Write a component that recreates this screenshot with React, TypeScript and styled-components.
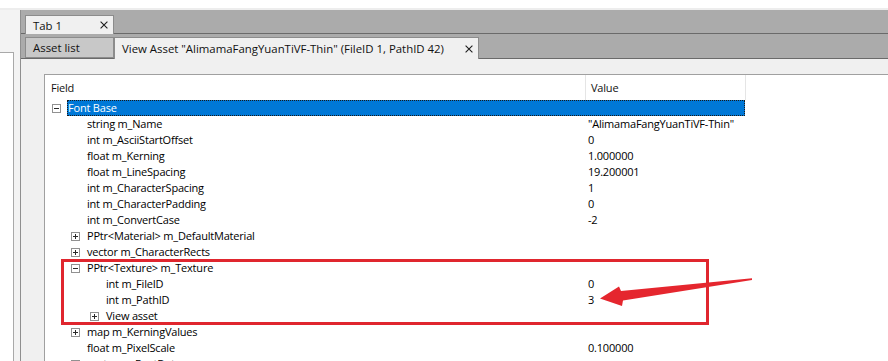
import styled, { createGlobalStyle } from "styled-components";

const GlobalStyle = createGlobalStyle`
  html, body { margin: 0; padding: 0; background: #fff; }
  body { font-family: "Open Sans", "Noto Sans", "Noto Sans CJK SC", sans-serif; }
`;

const Page = styled.div`
  position: relative;
  width: 888px;
  height: 361px;
  overflow: hidden;
  display: flex;
  flex-direction: column;
  background: #fff;
  font-family: "Open Sans", "Noto Sans", "Noto Sans CJK SC", sans-serif;
  font-size: 11px;
  letter-spacing: -0.2px;
  color: #000;
`;

const TopGap = styled.div`
  flex: none;
  height: 8px;
  border-bottom: 2px solid #ededed;
`;

const Workspace = styled.div`
  flex: 1;
  min-height: 0;
  display: flex;
`;

const SidePane = styled.div`
  flex: none;
  width: 20px;
  background: #f3f3f3;
  display: flex;
  flex-direction: column;
  padding-top: 42px;
  box-sizing: border-box;
`;

const SideBox = styled.div`
  flex: 1;
  width: 13px;
  background: #fff;
  border-top: 1px solid #a9a9a9;
  border-right: 1px solid #a9a9a9;
`;

const TabHost = styled.div`
  flex: 1;
  min-width: 0;
  display: flex;
  flex-direction: column;
  border-left: 1px solid #8f8f8f;
`;

const TabStrip = styled.div<{ $h: number }>`
  flex: none;
  height: ${({ $h }) => $h}px;
  display: flex;
  align-items: flex-end;
  padding-left: 4px;
  background: #ababab;
  border-bottom: 1px solid #6a6a6a;
`;

const Tab = styled.div<{ $w: number; $h: number; $active?: boolean }>`
  box-sizing: border-box;
  width: ${({ $w }) => $w}px;
  height: ${({ $h }) => $h}px;
  margin-bottom: ${({ $active }) => ($active ? "-1px" : "0")};
  display: flex;
  align-items: center;
  padding: 0 5px 0 7px;
  background: ${({ $active }) => ($active ? "#f0f0f0" : "#c8c8c8")};
  border: 1px solid #8c8c8c;
  border-bottom: ${({ $active }) => ($active ? "none" : "1px solid #8c8c8c")};
  font-size: 11.4px;
  letter-spacing: 0;
  white-space: nowrap;
  color: #111;
`;

const TabLabel = styled.span`
  flex: 1;
`;

const CloseIcon = styled.svg`
  flex: none;
  width: 8px;
  height: 8px;
`;

const TabPage = styled.div`
  flex: 1;
  min-height: 0;
  display: flex;
  background: #f0f0f0;
  padding: 15px 0 0 23px;
`;

const ListView = styled.div`
  flex: 1;
  background: #fff;
  border-top: 1px solid #a0a0a0;
  border-left: 1px solid #a0a0a0;
  display: flex;
  flex-direction: column;
`;

const Header = styled.div`
  flex: none;
  height: 25px;
  display: flex;
`;

const HeaderCell = styled.div<{ $w: number; $pad: number }>`
  box-sizing: border-box;
  width: ${({ $w }) => $w}px;
  padding-left: ${({ $pad }) => $pad}px;
  line-height: 25px;
  border-right: 1px solid #e5e5e5;
  color: #111;
`;

const Row = styled.div`
  width: 700px;
  height: 16px;
  flex: none;
  display: flex;
  line-height: 16px;
  white-space: nowrap;
`;

const Gutter = styled.div<{ $level: number }>`
  flex: none;
  box-sizing: border-box;
  width: ${({ $level }) => 22 + 19 * $level}px;
  padding-left: ${({ $level }) => 7 + 19 * $level}px;
  display: flex;
  align-items: center;
`;

const Expander = styled.span<{ $open: boolean }>`
  position: relative;
  box-sizing: border-box;
  width: 9px;
  height: 9px;
  border: 1px solid #919191;
  background: #fff;

  &::before {
    content: "";
    position: absolute;
    left: 1px;
    top: 3px;
    width: 5px;
    height: 1px;
    background: #2a2a2a;
  }

  &::after {
    content: "";
    display: ${({ $open }) => ($open ? "none" : "block")};
    position: absolute;
    left: 3px;
    top: 1px;
    width: 1px;
    height: 5px;
    background: #2a2a2a;
  }
`;

const Body = styled.div<{ $selected?: boolean }>`
  flex: 1;
  display: grid;
  grid-template-columns: 1fr 159px;
  background: ${({ $selected }) => ($selected ? "#0078d7" : "transparent")};
  color: ${({ $selected }) => ($selected ? "#fff" : "#000")};
  outline: ${({ $selected }) => ($selected ? "1px dotted #1a1a1a" : "none")};
  outline-offset: -1px;
`;

const Label = styled.span`
  padding-left: 1px;
`;

const Value = styled.span`
  padding-left: 2px;
`;

const Annotation = styled.svg`
  position: absolute;
  left: 0;
  top: 0;
  width: 888px;
  height: 361px;
  pointer-events: none;
`;

type Node = {
  label: string;
  value?: string;
  level: number;
  toggle?: "open" | "closed";
  selected?: boolean;
};

const rows: Node[] = [
  { label: "Font Base", level: 0, toggle: "open", selected: true },
  { label: "string m_Name", value: "\"AlimamaFangYuanTiVF-Thin\"", level: 1 },
  { label: "int m_AsciiStartOffset", value: "0", level: 1 },
  { label: "float m_Kerning", value: "1.000000", level: 1 },
  { label: "float m_LineSpacing", value: "19.200001", level: 1 },
  { label: "int m_CharacterSpacing", value: "1", level: 1 },
  { label: "int m_CharacterPadding", value: "0", level: 1 },
  { label: "int m_ConvertCase", value: "-2", level: 1 },
  { label: "PPtr<Material> m_DefaultMaterial", level: 1, toggle: "closed" },
  { label: "vector m_CharacterRects", level: 1, toggle: "closed" },
  { label: "PPtr<Texture> m_Texture", level: 1, toggle: "open" },
  { label: "int m_FileID", value: "0", level: 2 },
  { label: "int m_PathID", value: "3", level: 2 },
  { label: "View asset", level: 2, toggle: "closed" },
  { label: "map m_KerningValues", level: 1, toggle: "closed" },
  { label: "float m_PixelScale", value: "0.100000", level: 1 },
  { label: "vector m_FontData", level: 1, toggle: "closed" },
];

function Close() {
  return (
    <CloseIcon viewBox="0 0 8 8">
      <path d="M0.6 0.6 L7.4 7.4 M7.4 0.6 L0.6 7.4" stroke="#1e1e1e" strokeWidth="1.1" fill="none" />
    </CloseIcon>
  );
}

export default function App() {
  return (
    <Page>
      <GlobalStyle />
      <TopGap />
      <Workspace>
        <SidePane>
          <SideBox />
        </SidePane>
        <TabHost>
          <TabStrip $h={23}>
            <Tab $w={89} $h={19} $active>
              <TabLabel>Tab 1</TabLabel>
              <Close />
            </Tab>
          </TabStrip>
          <TabStrip $h={24}>
            <Tab $w={89} $h={21}>
              <TabLabel>Asset list</TabLabel>
            </Tab>
            <Tab $w={365} $h={22} $active>
              <TabLabel>View Asset "AlimamaFangYuanTiVF-Thin" (FileID 1, PathID 42)</TabLabel>
              <Close />
            </Tab>
          </TabStrip>
          <TabPage>
            <ListView>
              <Header>
                <HeaderCell $w={541} $pad={6}>Field</HeaderCell>
                <HeaderCell $w={160} $pad={5}>Value</HeaderCell>
              </Header>
              {rows.map((r, i) => (
                <Row key={i}>
                  <Gutter $level={r.level}>
                    {r.toggle && <Expander $open={r.toggle === "open"} />}
                  </Gutter>
                  <Body $selected={r.selected}>
                    <Label>{r.label}</Label>
                    <Value>{r.value ?? ""}</Value>
                  </Body>
                </Row>
              ))}
            </ListView>
          </TabPage>
        </TabHost>
      </Workspace>
      <Annotation viewBox="0 0 888 361">
        <rect x="62.5" y="260.5" width="645" height="63" fill="none" stroke="#e0262e" strokeWidth="3" />
        <polygon
          points="752,278.3 621,291 619,286.5 600,298.5 622,306 623,300.5 752,280"
          fill="#e5262e"
        />
      </Annotation>
    </Page>
  );
}
